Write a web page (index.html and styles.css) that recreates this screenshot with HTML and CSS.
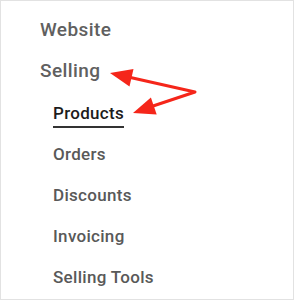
FILE: index.html
```html
<!DOCTYPE html>
<html>
<head>
<meta charset="utf-8">
<link rel="stylesheet" href="styles.css">
</head>
<body>
<div class="frame">
  <ul class="nav">
    <li class="top">Website</li>
    <li class="top">Selling</li>
    <li class="sub active"><span class="sel">Products</span></li>
    <li class="sub">Orders</li>
    <li class="sub">Discounts</li>
    <li class="sub">Invoicing</li>
    <li class="sub">Selling Tools</li>
  </ul>
  <svg class="arrows" width="294" height="300" viewBox="0 0 294 300">
    <g stroke="#f5261a" stroke-width="3" stroke-linecap="round" stroke-linejoin="round" fill="none">
      <polyline points="126,76.5 195,92 150,107"/>
    </g>
    <g fill="#f5261a">
      <polygon points="110,73 133.5,69 129.5,86.6"/>
      <polygon points="133,113 156.7,114.4 150.9,97.4"/>
    </g>
  </svg>
</div>
</body>
</html>
```
FILE: styles.css
```css
html, body {
  margin: 0;
  padding: 0;
  background: #fff;
}
.frame {
  position: relative;
  box-sizing: border-box;
  width: 294px;
  height: 300px;
  border: 1px solid #e2e2e2;
  overflow: hidden;
  font-family: Roboto, "Liberation Sans", Arial, sans-serif;
  font-weight: 500;
}
.nav {
  list-style: none;
  margin: 0;
  padding: 8px 0 0 0;
}
.nav li {
  height: 41px;
  line-height: 41px;
  white-space: nowrap;
}
.top {
  font-size: 19px;
  letter-spacing: 0.4px;
  color: #606060;
  padding-left: 39px;
}
.sub {
  font-size: 17px;
  letter-spacing: 0.3px;
  color: #595959;
  padding-left: 52px;
}
.top + .sub {
  margin-top: 2px;
}
.active {
  color: #1c1c1c;
}
.sel {
  display: inline-block;
  line-height: 19px;
  padding-bottom: 3px;
  border-bottom: 2px solid #333;
}
.arrows {
  position: absolute;
  left: -1px;
  top: -1px;
}
```
